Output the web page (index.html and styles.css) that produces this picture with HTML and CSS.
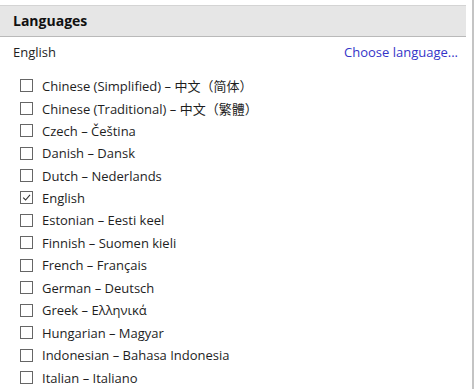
FILE: index.html
```html
<!DOCTYPE html>
<html lang="en">
<head>
    <meta charset="UTF-8">
    <title>Languages</title>
    <link rel="stylesheet" href="styles.css">
</head>
<body>
    <div class="panel">
        <div class="panel-header">Languages</div>
        <div class="current-row">
            <span class="current">English</span>
            <a href="#" class="choose-link">Choose language...</a>
        </div>
        <ul class="lang-list">
            <li><span class="check-box"></span>Chinese (Simplified) – 中文（简体）</li>
            <li><span class="check-box"></span>Chinese (Traditional) – 中文（繁體）</li>
            <li><span class="check-box"></span>Czech – Čeština</li>
            <li><span class="check-box"></span>Danish – Dansk</li>
            <li><span class="check-box"></span>Dutch – Nederlands</li>
            <li><span class="check-box checked"><svg viewBox="0 0 13 13" width="13" height="13"><path d="M3.2 6.6 L5.6 9 L10 3.8" fill="none" stroke="#333" stroke-width="1.1"/></svg></span>English</li>
            <li><span class="check-box"></span>Estonian – Eesti keel</li>
            <li><span class="check-box"></span>Finnish – Suomen kieli</li>
            <li><span class="check-box"></span>French – Français</li>
            <li><span class="check-box"></span>German – Deutsch</li>
            <li><span class="check-box"></span>Greek – Ελληνικά</li>
            <li><span class="check-box"></span>Hungarian – Magyar</li>
            <li><span class="check-box"></span>Indonesian – Bahasa Indonesia</li>
            <li><span class="check-box"></span>Italian – Italiano</li>
        </ul>
    </div>
</body>
</html>
```
FILE: styles.css
```css
* {
    margin: 0;
    padding: 0;
    box-sizing: border-box;
}
body {
    background-color: #fff;
    font-family: "Open Sans", "Noto Sans CJK SC", sans-serif;
    font-size: 13px;
    color: #1e1e1e;
    overflow: hidden;
}
.panel {
    width: 474px;
    height: 389px;
    border-right: 2px solid #c4c4c4;
    padding-top: 5px;
}
.panel-header {
    width: 466px;
    height: 32px;
    background-color: #e6e6e6;
    border-top: 1px solid #d4d4d4;
    border-bottom: 1px solid #b9b9b9;
    padding-left: 13px;
    font-weight: bold;
    font-size: 14px;
    line-height: 30px;
    color: #111;
}
.current-row {
    display: flex;
    justify-content: space-between;
    align-items: center;
    width: 472px;
    padding: 5px 14px 0 13px;
    height: 25px;
}
.choose-link {
    color: #3434c8;
    text-decoration: none;
}
.lang-list {
    list-style: none;
    margin-top: 12.5px;
    padding-left: 20px;
}
.lang-list li {
    display: flex;
    align-items: center;
    height: 22.46px;
    white-space: nowrap;
}
.check-box {
    flex-shrink: 0;
    display: inline-block;
    width: 13px;
    height: 13px;
    border: 1px solid #666;
    margin-right: 9px;
    position: relative;
}
.check-box svg {
    position: absolute;
    left: -1px;
    top: -1px;
}
```
